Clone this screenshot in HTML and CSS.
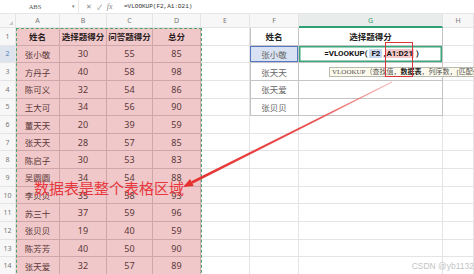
FILE: index.html
```html
<!DOCTYPE html>
<html lang="zh">
<head>
    <meta charset="UTF-8">
    <title>VLOOKUP 数据表</title>
    <link rel="stylesheet" href="styles.css">
</head>
<body>
<div class="sheet">
    <div class="fbar">
        <div class="namebox">ABS<span class="drop">▾</span></div>
        <div class="ficons"><span>✕</span><span>✓</span><span class="fx">fx</span></div>
        <div class="ftext">=VLOOKUP(F2,A1:D21)</div>
    </div>

    <div class="grid">
        <div class="corner"></div>
        <div class="ch">A</div><div class="ch">B</div><div class="ch">C</div><div class="ch">D</div>
        <div class="ch">E</div><div class="ch">F</div><div class="ch sel">G</div><div class="ch">H</div>

        <div class="rh">1</div>
        <div class="c p b">姓名</div><div class="c p b">选择题得分</div><div class="c p b">问答题得分</div><div class="c p b">总分</div>
        <div class="c"></div><div class="c f b">姓名</div><div class="c g b">选择题得分</div><div class="c"></div>

        <div class="rh act">2</div>
        <div class="c p">张小敬</div><div class="c p n">30</div><div class="c p n">55</div><div class="c p n">85</div>
        <div class="c"></div><div class="c f ref">张小敬</div>
        <div class="c g edit">=VLOOKUP(<span class="hf">F2</span>,<span class="ha">A1:D21</span>)</div><div class="c"></div>

        <div class="rh">3</div>
        <div class="c p">方丹子</div><div class="c p n">40</div><div class="c p n">58</div><div class="c p n">98</div>
        <div class="c"></div><div class="c f">张天天</div><div class="c g"></div><div class="c"></div>

        <div class="rh">4</div>
        <div class="c p">陈可义</div><div class="c p n">32</div><div class="c p n">54</div><div class="c p n">86</div>
        <div class="c"></div><div class="c f">张天爱</div><div class="c g"></div><div class="c"></div>

        <div class="rh">5</div>
        <div class="c p">王大可</div><div class="c p n">34</div><div class="c p n">56</div><div class="c p n">90</div>
        <div class="c"></div><div class="c f">张贝贝</div><div class="c g"></div><div class="c"></div>

        <div class="rh">6</div>
        <div class="c p">董天天</div><div class="c p n">20</div><div class="c p n">39</div><div class="c p n">59</div>
        <div class="c"></div><div class="c"></div><div class="c"></div><div class="c"></div>

        <div class="rh">7</div>
        <div class="c p">张天天</div><div class="c p n">28</div><div class="c p n">57</div><div class="c p n">85</div>
        <div class="c"></div><div class="c"></div><div class="c"></div><div class="c"></div>

        <div class="rh">8</div>
        <div class="c p">陈启子</div><div class="c p n">30</div><div class="c p n">53</div><div class="c p n">83</div>
        <div class="c"></div><div class="c"></div><div class="c"></div><div class="c"></div>

        <div class="rh">9</div>
        <div class="c p">吴圆圆</div><div class="c p n">34</div><div class="c p n">54</div><div class="c p n">88</div>
        <div class="c"></div><div class="c"></div><div class="c"></div><div class="c"></div>

        <div class="rh">10</div>
        <div class="c p">李贝贝</div><div class="c p n">35</div><div class="c p n">58</div><div class="c p n">93</div>
        <div class="c"></div><div class="c"></div><div class="c"></div><div class="c"></div>

        <div class="rh">11</div>
        <div class="c p">苏三十</div><div class="c p n">37</div><div class="c p n">59</div><div class="c p n">96</div>
        <div class="c"></div><div class="c"></div><div class="c"></div><div class="c"></div>

        <div class="rh">12</div>
        <div class="c p">张贝贝</div><div class="c p n">19</div><div class="c p n">40</div><div class="c p n">59</div>
        <div class="c"></div><div class="c"></div><div class="c"></div><div class="c"></div>

        <div class="rh">13</div>
        <div class="c p">陈芳芳</div><div class="c p n">40</div><div class="c p n">50</div><div class="c p n">90</div>
        <div class="c"></div><div class="c"></div><div class="c"></div><div class="c"></div>

        <div class="rh">14</div>
        <div class="c p">张天爱</div><div class="c p n">32</div><div class="c p n">57</div><div class="c p n">89</div>
        <div class="c"></div><div class="c"></div><div class="c"></div><div class="c"></div>
    </div>

    <!-- overlays -->
    <div class="marquee"></div>
    <div class="tip">VLOOKUP（查找值，<b>数据表</b>，列序数，[匹配条件]）</div>
    <div class="refbox"></div>
    <svg class="arrow" width="474" height="274" viewBox="0 0 474 274">
        <defs>
            <linearGradient id="fade" x1="392" y1="82" x2="183" y2="187" gradientUnits="userSpaceOnUse">
                <stop offset="0" stop-color="#ef6b6b" stop-opacity="0.45"/>
                <stop offset="0.35" stop-color="#e84040" stop-opacity="0.9"/>
                <stop offset="1" stop-color="#e5302e"/>
            </linearGradient>
        </defs>
        <polygon points="392.2,82.4 391.8,81.6 191.3,181.3 192.5,183.7" fill="url(#fade)"/>
        <polygon points="183,187 193.7,186.1 190.1,178.9" fill="#e5302e"/>
    </svg>
    <div class="note">数据表是整个表格区域</div>
    <div class="mark">CSDN @yb1132</div>
</div>
</body>
</html>
```

FILE: styles.css
```css
body {
    margin: 0;
    background: #fff;
    overflow: hidden;
    font-family: "Noto Sans", "Noto Sans CJK SC", sans-serif;
}
.sheet {
    position: relative;
    width: 474px;
    height: 274px;
    overflow: hidden;
}
.fbar {
    display: flex;
    align-items: center;
    height: 14px;
    box-sizing: border-box;
    border-bottom: 1px solid #e6e6e6;
    color: #444;
}
.namebox {
    width: 79px;
    height: 13px;
    box-sizing: border-box;
    border-right: 1px solid #e6e6e6;
    position: relative;
    font-family: "Liberation Serif", serif;
    font-size: 6.5px;
    line-height: 13px;
    text-align: center;
    color: #555;
    padding-right: 8px;
}
.drop {
    position: absolute;
    right: 3px;
    top: 0;
    font-size: 5px;
    color: #777;
}
.ficons {
    display: flex;
    gap: 5px;
    padding-left: 7px;
    width: 38px;
    font-size: 7px;
    color: #888;
}
.fx {
    font-family: "Liberation Serif", serif;
    font-style: italic;
    font-size: 8px;
}
.ftext {
    font-family: "Liberation Mono", monospace;
    font-size: 6px;
    color: #333;
}

.grid {
    display: grid;
    grid-template-columns: 16px 44px 47px 46px 48px 49px 49px 144px 31px;
    grid-template-rows: 14px;
    grid-auto-rows: 17.65px;
}
.grid > div {
    box-sizing: border-box;
    border-right: 1px solid #e4e4e4;
    border-bottom: 1px solid #e4e4e4;
    display: flex;
    align-items: center;
    justify-content: center;
    white-space: nowrap;
}
.corner, .ch, .rh {
    background: #f7f7f7;
    color: #777;
    font-size: 7px;
}
.corner {
    position: relative;
}
.corner::after {
    content: "";
    position: absolute;
    right: 2px;
    bottom: 2px;
    border-left: 4px solid transparent;
    border-bottom: 4px solid #c9c9c9;
}
.ch.sel {
    background: #e8ecea;
    color: #2fa074;
    border-bottom: 2px solid #2fa074;
}
.rh.act {
    background: #dde4ee;
    color: #5b7fb8;
}
.c {
    font-size: 8.5px;
    color: #444;
}
.c.p {
    background: #f0c8ca;
    color: #5b3838;
    border-color: #cfa6a9;
}
.c.n {
    font-size: 9px;
}
.c.b {
    font-weight: bold;
    color: #2b1e1e;
}
.c.f, .c.g {
    border-right-color: #c4c4c4;
    border-bottom-color: #c4c4c4;
}
.c.f {
    box-shadow: inset 1px 0 0 #c4c4c4;
    color: #666;
}
.c.f.b, .c.g.b {
    color: #222;
}
.c.ref {
    background: #d9e2f3;
    box-shadow: inset 0 0 0 1px #5577c6;
}
.c.edit {
    box-shadow: inset 0 0 0 1.5px #3aa67c;
    font-family: Roboto, "Noto Sans", sans-serif;
    font-weight: bold;
    font-size: 8px;
    color: #111;
    padding-left: 2px;
}
.hf {
    background: #c9d7f1;
    padding: 0 2px;
    margin: 0 1px 0 2px;
}
.ha {
    background: #f5c9c9;
    padding: 0 1px;
    margin-right: 2px;
}

.marquee {
    position: absolute;
    left: 16px;
    top: 28px;
    width: 186px;
    height: 260px;
    box-sizing: border-box;
    border: 1px dashed #4ba66c;
}
.tip {
    position: absolute;
    left: 329px;
    top: 67px;
    height: 10px;
    box-sizing: border-box;
    padding: 0 2px;
    background: #fbfaec;
    border: 1px solid #b9b9b0;
    font-family: "Liberation Serif", "Noto Sans CJK SC", serif;
    font-size: 7px;
    line-height: 8px;
    color: #555;
    white-space: nowrap;
}
.tip b {
    color: #222;
}
.refbox {
    position: absolute;
    left: 385px;
    top: 42px;
    width: 28px;
    height: 35px;
    box-sizing: border-box;
    border: 1.5px solid #d8353d;
}
.arrow {
    position: absolute;
    left: 0;
    top: 0;
}
.note {
    position: absolute;
    left: 34px;
    top: 179px;
    font-family: "Noto Sans CJK SC", sans-serif;
    font-size: 15px;
    line-height: 17px;
    color: #e8383d;
    white-space: nowrap;
}
.mark {
    position: absolute;
    right: 0;
    top: 261px;
    font-family: "Liberation Sans", sans-serif;
    font-size: 8.5px;
    color: #c4c4c4;
}
```
